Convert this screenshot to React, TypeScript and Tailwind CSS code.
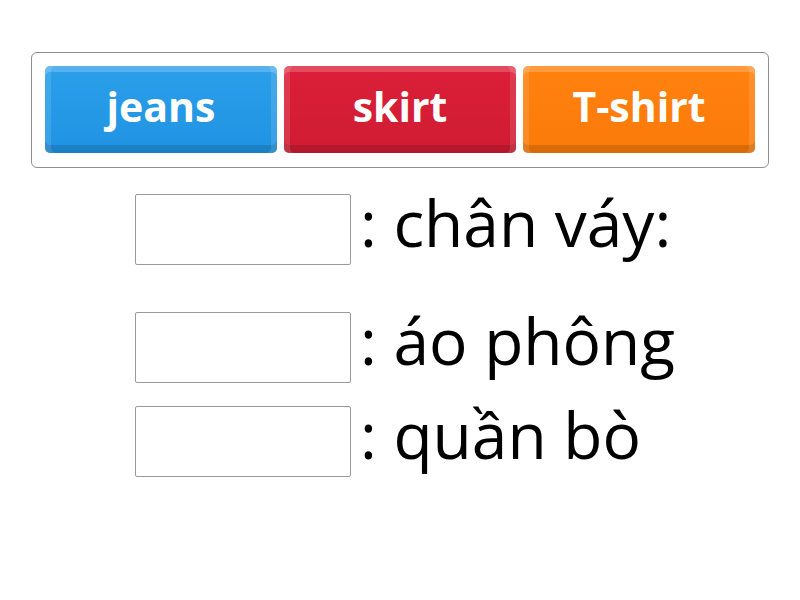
import React from "react";

const buttons = [
  {
    label: "jeans",
    cls: "bg-gradient-to-b from-[#2c9fea] to-[#1f93e2]",
  },
  {
    label: "skirt",
    cls: "bg-gradient-to-b from-[#dc1f38] to-[#cf1c33]",
  },
  {
    label: "T-shirt",
    cls: "bg-gradient-to-b from-[#ff820f] to-[#fb7a0a]",
  },
];

const rows = [
  { text: ": chân váy:", mt: "mt-[26px]" },
  { text: ": áo phông", mt: "mt-[47px]" },
  { text: ": quần bò", mt: "mt-[23px]" },
];

export default function App() {
  return (
    <div
      className="w-[800px] h-[600px] bg-white flex flex-col"
      style={{ fontFamily: '"Open Sans", "Noto Sans", sans-serif' }}
    >
      <div className="mt-[52px] mx-[31px] border border-[#8e8e8e] rounded-[6px] px-[13px] pt-[13px] pb-[14px] flex gap-[7px]">
        {buttons.map((b) => (
          <div
            key={b.label}
            className={`flex-1 h-[87px] rounded-[5px] flex items-center justify-center pb-[8px] pt-[2px] text-white font-bold text-[41px] leading-none shadow-[inset_0_6px_0_rgba(255,255,255,0.2),inset_6px_0_0_rgba(255,255,255,0.12),inset_-6px_0_0_rgba(255,255,255,0.12),inset_0_-8px_0_rgba(0,0,0,0.13)] ${b.cls}`}
          >
            {b.label}
          </div>
        ))}
      </div>
      {rows.map((r) => (
        <div key={r.text} className={`${r.mt} pl-[135px] flex items-center`}>
          <div className="w-[216px] h-[71px] border border-[#9a9a9a] rounded-[2px] bg-white shrink-0" />
          <div className="ml-[9px] -mt-[14px] text-[64px] leading-none text-black whitespace-nowrap">
            {r.text}
          </div>
        </div>
      ))}
    </div>
  );
}
